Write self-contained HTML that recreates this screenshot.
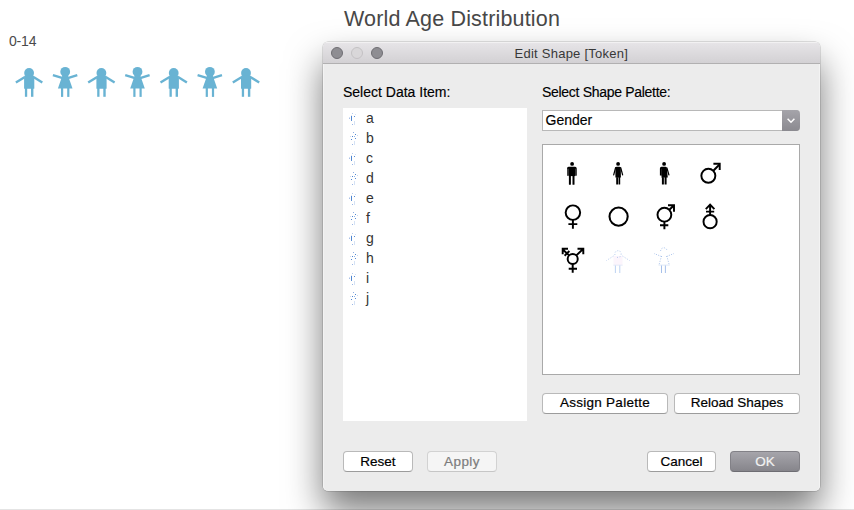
<!DOCTYPE html>
<html><head><meta charset="utf-8">
<style>
*{margin:0;padding:0;box-sizing:border-box}
html,body{width:854px;height:510px;overflow:hidden;background:#fff;font-family:"Liberation Sans",sans-serif}
.a{position:absolute;white-space:nowrap}
#title{left:344px;top:7px;font-size:21.5px;color:#484848;letter-spacing:0.17px}
#age{left:9px;top:33px;font-size:14px;color:#4a4a4a;letter-spacing:-0.2px}
#bottomline{left:0;top:509px;width:854px;height:1px;background:#e4e4e4}
#dlg{left:323px;top:41.5px;width:497px;height:449.5px;background:#ececec;border-radius:5px;
 box-shadow:inset 1px 0 0 #f3f3f3,inset -1px 0 0 #f3f3f3,0 0 0 0.5px rgba(0,0,0,0.22),0 20px 36px 0 rgba(0,0,0,0.53);overflow:hidden}
#tbar{position:absolute;left:0;top:0;width:100%;height:22px;background:linear-gradient(#e8e6e9,#e5e3e6 10%,#d3d1d4);border-bottom:1px solid #b1b0b1;box-shadow:inset 0 1px 0 #f2f1f2}
.dot{position:absolute;top:5px;width:12px;height:12px;border-radius:50%;background:#8e8d92;border:1px solid #6f6e73}
.dot.mid{background:#d9d7d9;border-color:#c3c1c3}
.t14{font-size:14px;line-height:14px;color:#000;-webkit-text-stroke:0.15px #000}
.item{font-size:14px;line-height:14px;color:#333;left:366px}
#list{left:343px;top:108px;width:184px;height:313px;background:#fff}
#dd{left:542px;top:110px;width:258px;height:21px;background:#fff;border:1px solid #b8b8b8;border-right:none;border-radius:0 4px 4px 0}
#ddbtn{position:absolute;right:0;top:-1px;width:18px;height:21px;background:linear-gradient(#a5a4aa,#8b8a90);border-radius:0 4px 4px 0}
#shapes{left:542px;top:144px;width:258px;height:230.5px;background:#fff;border:1px solid #a9a9a9}
.btn{position:absolute;height:21px;background:#fff;border:1px solid #b9b9b9;border-bottom-color:#9c9c9c;border-radius:4px;font-size:13.5px;color:#000;text-align:center;line-height:19px;white-space:nowrap;-webkit-text-stroke:0.2px currentColor}
.btn.dis{background:#f5f5f5;color:#7c7c7c;border-color:#d2d2d2;border-bottom-color:#c6c6c6;letter-spacing:0.4px}
.btn.ok{background:linear-gradient(#a6a5ab,#86858b);border-color:#828187;border-bottom-color:#6e6d73;color:#f2f2f2}
</style></head><body>
<div id="title" class="a">World Age Distribution</div>
<div id="age" class="a">0-14</div>
<svg class="a" style="left:0;top:0" width="300" height="110" viewBox="0 0 300 110">
 <defs>
  <g id="boy" fill="#69b3d3">
   <circle cx="0" cy="73" r="4.9"/>
   <rect x="-5" y="75.7" width="10.2" height="13" rx="0.5"/>
   <path d="M-4.6 77.3 L-13.2 82.5" stroke="#69b3d3" stroke-width="2.4"/>
   <path d="M4.8 77.3 L13.2 82.5" stroke="#69b3d3" stroke-width="2.4"/>
   <rect x="-4.2" y="88" width="2.3" height="8.8"/>
   <rect x="1.9" y="88" width="2.4" height="8.8"/>
  </g>
  <g id="girl" fill="#69b3d3">
   <circle cx="0" cy="71.8" r="4.9"/>
   <path d="M-2.8 75.5 L2.8 75.5 L7.3 88.6 L-7.3 88.6 Z"/>
   <path d="M-2.4 78.2 L-12.3 75.1" stroke="#69b3d3" stroke-width="2.4"/>
   <path d="M2.6 78.2 L12.1 75.1" stroke="#69b3d3" stroke-width="2.4"/>
   <rect x="-4.2" y="88" width="2.2" height="8.9"/>
   <rect x="2" y="88" width="2.2" height="8.9"/>
  </g>
 </defs>
 <use href="#boy" x="29.1"/>
 <use href="#girl" x="65.2"/>
 <use href="#boy" x="101.4"/>
 <use href="#girl" x="137.5"/>
 <use href="#boy" x="173.7"/>
 <use href="#girl" x="209.9"/>
 <use href="#boy" x="246"/>
</svg>
<div id="bottomline" class="a"></div>

<div id="dlg" class="a">
 <div id="tbar">
  <div class="dot" style="left:8px"></div>
  <div class="dot mid" style="left:28px"></div>
  <div class="dot" style="left:48px"></div>
 </div>
</div>
<div class="a" style="left:514.5px;top:47px;font-size:13px;line-height:13px;color:#383838;letter-spacing:0.25px">Edit Shape [Token]</div>
<div class="a t14" style="left:343px;top:85.15px">Select Data Item:</div>
<div class="a t14" style="left:542px;top:85.15px;letter-spacing:-0.3px">Select Shape Palette:</div>
<div id="list" class="a"></div>
<div class="a item" style="top:110.55px">a</div>
<div class="a item" style="top:130.55px">b</div>
<div class="a item" style="top:150.55px">c</div>
<div class="a item" style="top:170.55px">d</div>
<div class="a item" style="top:190.55px">e</div>
<div class="a item" style="top:210.55px">f</div>
<div class="a item" style="top:230.55px">g</div>
<div class="a item" style="top:250.55px">h</div>
<div class="a item" style="top:270.55px">i</div>
<div class="a item" style="top:290.55px">j</div>
<div id="dd" class="a"><div id="ddbtn"></div></div>
<div class="a t14" style="left:545.5px;top:113.15px">Gender</div>
<div id="shapes" class="a"></div>
<div class="btn" style="left:542px;top:393px;width:126px;letter-spacing:0.25px;line-height:18px">Assign Palette</div>
<div class="btn" style="left:674px;top:393px;width:126px;line-height:18px">Reload Shapes</div>
<div class="btn" style="left:343px;top:451px;width:70px">Reset</div>
<div class="btn dis" style="left:427px;top:451px;width:70px">Apply</div>
<div class="btn" style="left:647px;top:451px;width:69px">Cancel</div>
<div class="btn ok" style="left:730px;top:451px;width:70px">OK</div>

<svg class="a" style="left:0;top:0" width="854" height="510" viewBox="0 0 854 510">
 <defs>
  <g id="ldb">
   <rect x="351" y="115.8" width="1" height="5.1" fill="#4f86d0"/>
   <rect x="352" y="113" width="1" height="1" fill="#b8cdf0"/>
   <rect x="354" y="116" width="1" height="1" fill="#5a8fd8"/>
   <rect x="349" y="117.5" width="1" height="1.5" fill="#a8c0e8"/>
   <rect x="354" y="121" width="1" height="4" fill="#d5e2f5"/>
   <rect x="352" y="124" width="1" height="1" fill="#9ab8e6"/>
   <rect x="355" y="114" width="1" height="1" fill="#d8e4f5"/>
  </g>
  <g id="ldg">
   <rect x="353" y="132" width="1" height="1" fill="#8fb0e5"/>
   <rect x="355" y="134" width="1" height="1" fill="#4f86d0"/>
   <rect x="352" y="136" width="1" height="1" fill="#4f86d0"/>
   <rect x="354" y="136" width="1" height="1" fill="#8fb0e5"/>
   <rect x="350" y="136" width="1" height="1" fill="#c8d8f0"/>
   <rect x="357" y="135" width="1" height="1" fill="#c8d8f0"/>
   <rect x="351" y="139" width="1" height="1" fill="#4f86d0"/>
   <rect x="355" y="138" width="1" height="1" fill="#5a8fd8"/>
   <rect x="354" y="141" width="1" height="4" fill="#d5e2f5"/>
   <rect x="352" y="144" width="1" height="1" fill="#9ab8e6"/>
  </g>
 </defs>
 <use href="#ldb"/><use href="#ldg"/>
 <use href="#ldb" y="40"/><use href="#ldg" y="40"/>
 <use href="#ldb" y="80"/><use href="#ldg" y="80"/>
 <use href="#ldb" y="120"/><use href="#ldg" y="120"/>
 <use href="#ldb" y="160"/><use href="#ldg" y="160"/>

 <!-- dropdown chevron -->
 <path d="M787.6 118.8 L791 122.2 L794.4 118.8" fill="none" stroke="#fff" stroke-width="1.5"/>

 <!-- man -->
 <g fill="#000">
  <circle cx="572.1" cy="163.9" r="1.9"/>
  <path d="M567 175.6 V168.4 Q567 166.8 568.6 166.8 H575.1 Q576.7 166.8 576.7 168.4 V175.6 H575.3 V169 H568.7 V175.6 Z"/>
  <rect x="567.1" y="168.6" width="1.5" height="7" fill="#4a4a4a"/>
  <rect x="575.3" y="168.6" width="1.4" height="7" fill="#4a4a4a"/>
  <rect x="568.7" y="167.5" width="6.6" height="8.6"/>
  <path d="M568.9 175.5 H570.9 V184.2 Q570.9 184.8 570.3 184.8 H569.5 Q568.9 184.8 568.9 184.2 Z"/>
  <path d="M572.5 175.5 H574.5 V184.2 Q574.5 184.8 573.9 184.8 H573.1 Q572.5 184.8 572.5 184.2 Z"/>
 </g>
 <!-- woman -->
 <g fill="#000">
  <circle cx="618.1" cy="163.9" r="1.9"/>
  <path d="M615.4 177.4 V168.2 Q615.4 166.8 616.8 166.8 H619.3 Q620.8 166.8 620.8 168.2 L620.9 177.4 Z"/>
  <path d="M615.6 167.6 L613.7 174.9 M620.7 167.6 L622.6 174.9" stroke="#000" stroke-width="1.25" stroke-linecap="round"/>
  <rect x="616.2" y="177" width="1.8" height="7.6" rx="0.4"/>
  <rect x="618.5" y="177" width="1.7" height="7.6" rx="0.4"/>
 </g>
 <!-- half -->
 <g fill="#000">
  <circle cx="664.1" cy="163.9" r="1.9"/>
  <path d="M659.9 175.6 V168.4 Q659.9 166.8 661.5 166.8 H665.4 Q666.6 166.8 666.8 168 L667.8 177.4 H661.5 V175.6 Z"/>
  <rect x="661.2" y="168.8" width="0.35" height="6.8" fill="#555"/>
  <path d="M666.9 167.8 L668.9 174.9" stroke="#000" stroke-width="1.25" stroke-linecap="round"/>
  <rect x="661.9" y="177" width="2" height="7.6" rx="0.4"/>
  <rect x="664.6" y="177" width="2" height="7.6" rx="0.4"/>
 </g>
 <g fill="none" stroke="#000" stroke-width="1.95">
  <!-- male -->
  <circle cx="708.35" cy="175.8" r="7"/>
  <path d="M713.3 170.8 L719.5 164.5"/>
  <path d="M713.4 163.7 H719.7 V169.9"/>
  <!-- female -->
  <circle cx="572.9" cy="212.6" r="7.25"/>
  <path d="M572.9 219.8 V228.8 M568.4 224.1 H577.3"/>
  <!-- circle -->
  <circle cx="618.6" cy="216.6" r="9.1" stroke-width="2.05"/>
  <!-- male-female -->
  <circle cx="664.4" cy="214.7" r="6.9"/>
  <path d="M669.3 209.8 L673.6 205.7 M668 205.3 H674 V211.7"/>
  <path d="M664.4 221.6 V229.3 M660 225.3 H668.3"/>
  <!-- up arrow -->
  <circle cx="710.1" cy="221.7" r="6.6"/>
  <path d="M710.1 215.1 V204.4 M705.8 209.1 L710.1 204.6 L714.4 209.1 M706 211.6 H714.2"/>
  <!-- transgender -->
  <circle cx="572.7" cy="259" r="5.05"/>
  <path d="M576.3 255.4 L582.8 249.2 M577.5 248.7 H583.3 V254.3"/>
  <path d="M569.1 255.4 L562.6 249.2 M568 248.7 H562.7 V254.3"/>
  <path d="M564.6 255.7 L569.4 251"/>
  <path d="M572.7 264.1 V272.7 M568.7 268.7 H577"/>
 </g>
 <!-- faint figures -->
 <rect x="613.5" y="256" width="9" height="9.2" fill="#fcf5fc"/>
 <path d="M613.3 265.2 H622.7" stroke="#dfe8f8" stroke-width="0.8"/>
 <g fill="none" stroke="#9db9e8" stroke-width="0.8" stroke-dasharray="1 1.6">
  <path d="M615 255 A3.2 3.2 0 1 1 621 255"/>
  <path d="M613.5 256 L606.5 260.5 M622.5 256 L629.5 260.5"/>
  <path d="M617 257.5 L621 256.5"/>
 </g>
 <path d="M615.4 265.5 V273 M619.8 265.5 V273" stroke="#b6cdf0" stroke-width="0.9" fill="none"/>
 <path d="M658.5 265.1 H669.8" stroke="#d5e2f5" stroke-width="0.8"/>
 <g fill="none" stroke="#8fb0e5" stroke-width="0.8" stroke-dasharray="1 1.5">
  <path d="M660.6 251 A3 3 0 1 1 667 251"/>
  <path d="M661.5 256 L659 265 M666.8 256 L669.3 265"/>
  <path d="M661.5 256.5 L654 253.5 M666.5 256.5 L674 253.5"/>
 </g>
 <path d="M661.5 265.5 V273 M665.4 265.5 V273" stroke="#9cb9e8" stroke-width="0.9" fill="none"/>
</svg>
</body></html>
